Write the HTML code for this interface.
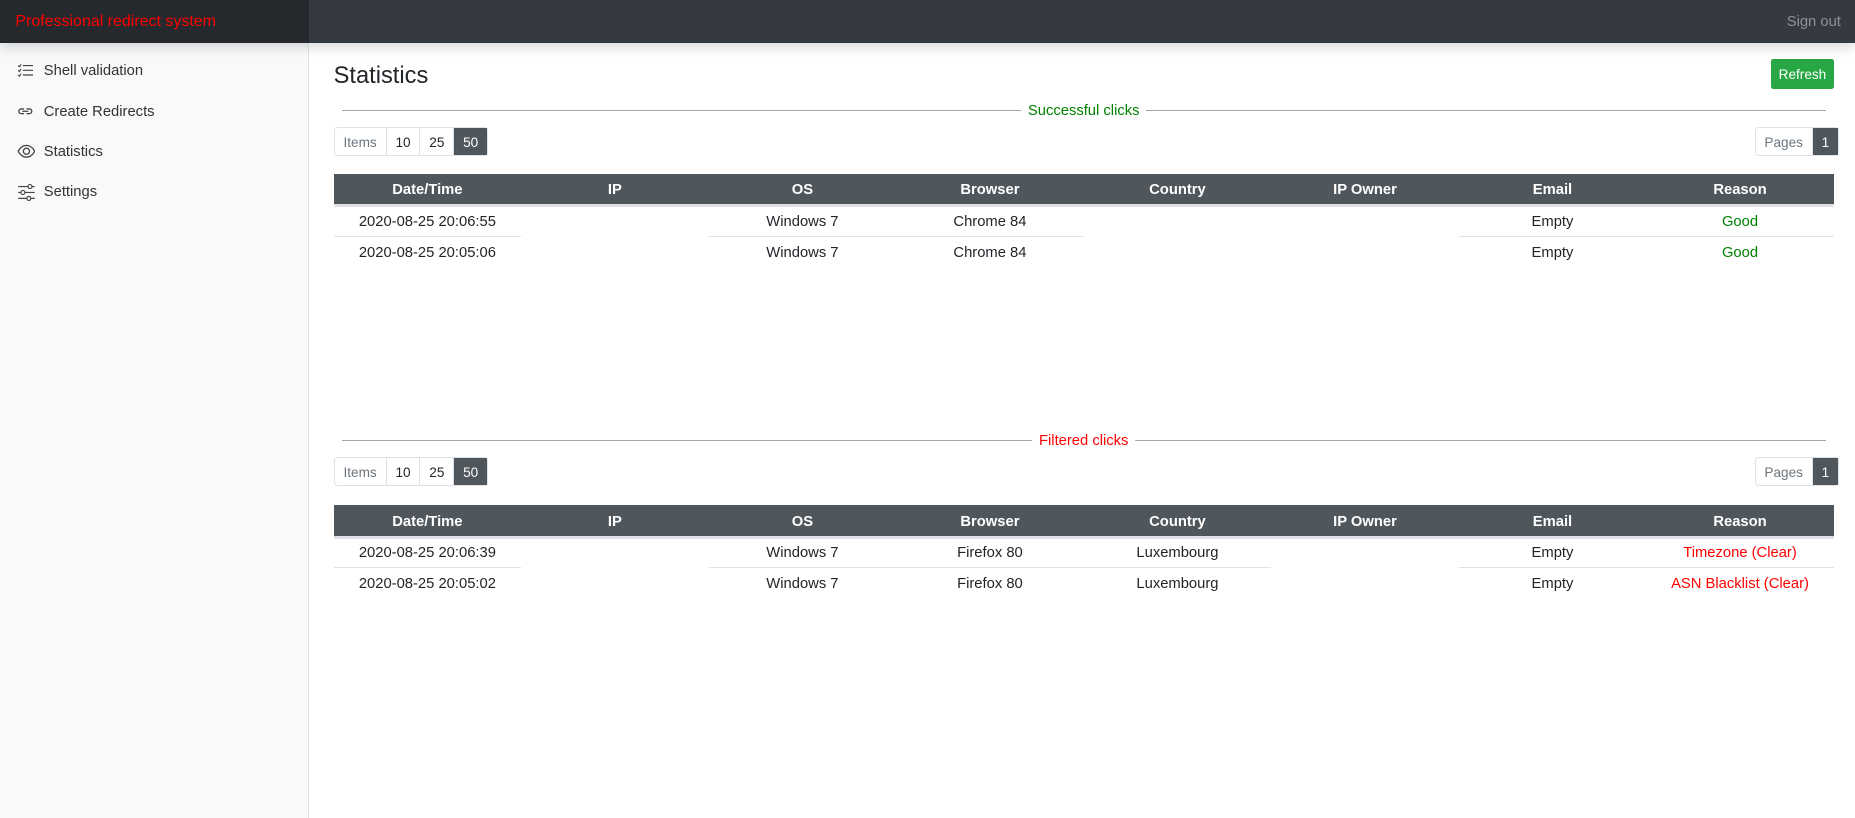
<!DOCTYPE html>
<html><head><meta charset="utf-8"><style>
html,body{margin:0;padding:0;background:#fff;overflow:hidden}
#w{width:1568px;height:691px;zoom:1.1831;position:relative;font-family:"Liberation Sans",sans-serif;color:#212529;font-size:12.5px}
.nav{position:absolute;left:0;top:0;width:1568px;height:36px;background:#343a40;box-shadow:0 4px 10px rgba(0,0,0,.15);z-index:2}
.brand{position:absolute;left:0;top:0;width:261px;height:36px;background:#25282c;color:#f00;font-size:13.5px;line-height:38px;padding-left:13px;box-sizing:border-box}
.so{position:absolute;right:12px;top:0;line-height:38px;color:#8e9296;font-size:12.5px}
.side{position:absolute;left:0;top:36px;width:261px;height:655px;background:#f8f9fa;border-right:1px solid #e3e4e6;box-sizing:border-box}
.it{position:absolute;left:14px;height:16px;line-height:16px;color:#333;font-size:12.5px}
.it svg{position:absolute;left:0;top:0}
.it span{position:absolute;left:23px;white-space:nowrap;top:0}
.title{position:absolute;left:282px;top:53px;font-size:20px}
.btn{position:absolute;left:1497px;top:50px;width:53px;height:25px;background:#28a745;color:#fff;font-size:11.5px;line-height:27px;text-align:center;border-radius:2px}
.div{position:absolute;left:289px;width:1254px;height:1px;background:#a5a5a5}
.div span{position:absolute;left:50%;transform:translateX(-50%);top:-7px;background:#fff;padding:0 6px;font-size:12.5px;line-height:16px;white-space:nowrap}
.grp{position:absolute;height:25px;display:flex;border:1px solid #dee2e6;border-radius:3px;box-sizing:border-box;font-size:11.5px;line-height:25px}
.grp div{padding:0 7.5px;border-left:1px solid #dee2e6}
.grp div:first-child{border-left:0;color:#6c757d}
.grp .a{background:#4f565c;color:#fff}
table{position:absolute;left:282px;width:1268px;border-collapse:collapse;table-layout:fixed}
th{background:#4f565c;color:#fff;font-weight:bold;height:22px;padding:2px 0 0;font-size:12.5px;border-bottom:3px solid #dee2e6;box-sizing:border-box}
td{height:26px;padding:2px 0 0;text-align:center;font-size:12.5px;box-sizing:border-box;line-height:20px}
tr.r1 td.b{border-bottom:1px solid #dee2e6}
.g{color:#008000}.rd{color:#f00}
</style></head><body><div id="w">
<div class="nav"><div class="brand">Professional redirect system</div><div class="so">Sign out</div></div>
<div class="side">
<div class="it" style="top:16px"><svg width="14" height="14" viewBox="0 0 14 14" fill="none" stroke="#444" stroke-width="1"><path d="M5 3h9M5 7h9M5 11h9M1 3l1 1 1.5-2M1 7l1 1 1.5-2M1 11l1 1 1.5-2"/></svg><span>Shell validation</span></div>
<div class="it" style="top:51px"><svg width="14" height="14" viewBox="0 0 14 14" fill="none" stroke="#444" stroke-width="1.1"><path d="M6 5H3.5a2 2 0 0 0 0 4H6M8 5h2.5a2 2 0 0 1 0 4H8M4.5 7h5"/></svg><span>Create Redirects</span></div>
<div class="it" style="top:85px"><svg width="16" height="14" viewBox="0 0 16 14" fill="none" stroke="#444" stroke-width="1.1"><path d="M1 7c2-3.5 4-5 7-5s5 1.5 7 5c-2 3.5-4 5-7 5S3 10.5 1 7z"/><circle cx="8" cy="7" r="2.6"/></svg><span>Statistics</span></div>
<div class="it" style="top:119px"><svg width="16" height="16" viewBox="0 0 16 16" fill="none" stroke="#444" stroke-width="1"><path d="M1 3h8M13 3h2M1 8h2M7 8h8M1 13h7M12 13h3"/><circle cx="11" cy="3" r="1.7"/><circle cx="5" cy="8" r="1.7"/><circle cx="10" cy="13" r="1.7"/></svg><span>Settings</span></div>
</div>
<div class="title">Statistics</div>
<div class="btn">Refresh</div>

<div class="div" style="top:93px"><span class="g">Successful clicks</span></div>
<div class="grp" style="left:282px;top:107px"><div>Items</div><div>10</div><div>25</div><div class="a">50</div></div>
<div class="grp" style="left:1483px;top:107px"><div>Pages</div><div class="a">1</div></div>
<table style="top:147px"><tr><th style="height:27px">Date/Time</th><th>IP</th><th>OS</th><th>Browser</th><th>Country</th><th>IP Owner</th><th>Email</th><th>Reason</th></tr>
<tr class="r1"><td class="b">2020-08-25 20:06:55</td><td></td><td class="b">Windows 7</td><td class="b">Chrome 84</td><td></td><td></td><td class="b">Empty</td><td class="b g">Good</td></tr>
<tr><td>2020-08-25 20:05:06</td><td></td><td>Windows 7</td><td>Chrome 84</td><td></td><td></td><td>Empty</td><td class="g">Good</td></tr></table>

<div class="div" style="top:372px"><span class="rd">Filtered clicks</span></div>
<div class="grp" style="left:282px;top:386px"><div>Items</div><div>10</div><div>25</div><div class="a">50</div></div>
<div class="grp" style="left:1483px;top:386px"><div>Pages</div><div class="a">1</div></div>
<table style="top:427px"><tr><th style="height:27px">Date/Time</th><th>IP</th><th>OS</th><th>Browser</th><th>Country</th><th>IP Owner</th><th>Email</th><th>Reason</th></tr>
<tr class="r1"><td class="b">2020-08-25 20:06:39</td><td></td><td class="b">Windows 7</td><td class="b">Firefox 80</td><td class="b">Luxembourg</td><td></td><td class="b">Empty</td><td class="b rd">Timezone (Clear)</td></tr>
<tr><td>2020-08-25 20:05:02</td><td></td><td>Windows 7</td><td>Firefox 80</td><td>Luxembourg</td><td></td><td>Empty</td><td class="rd">ASN Blacklist (Clear)</td></tr></table>
</div></body></html>
